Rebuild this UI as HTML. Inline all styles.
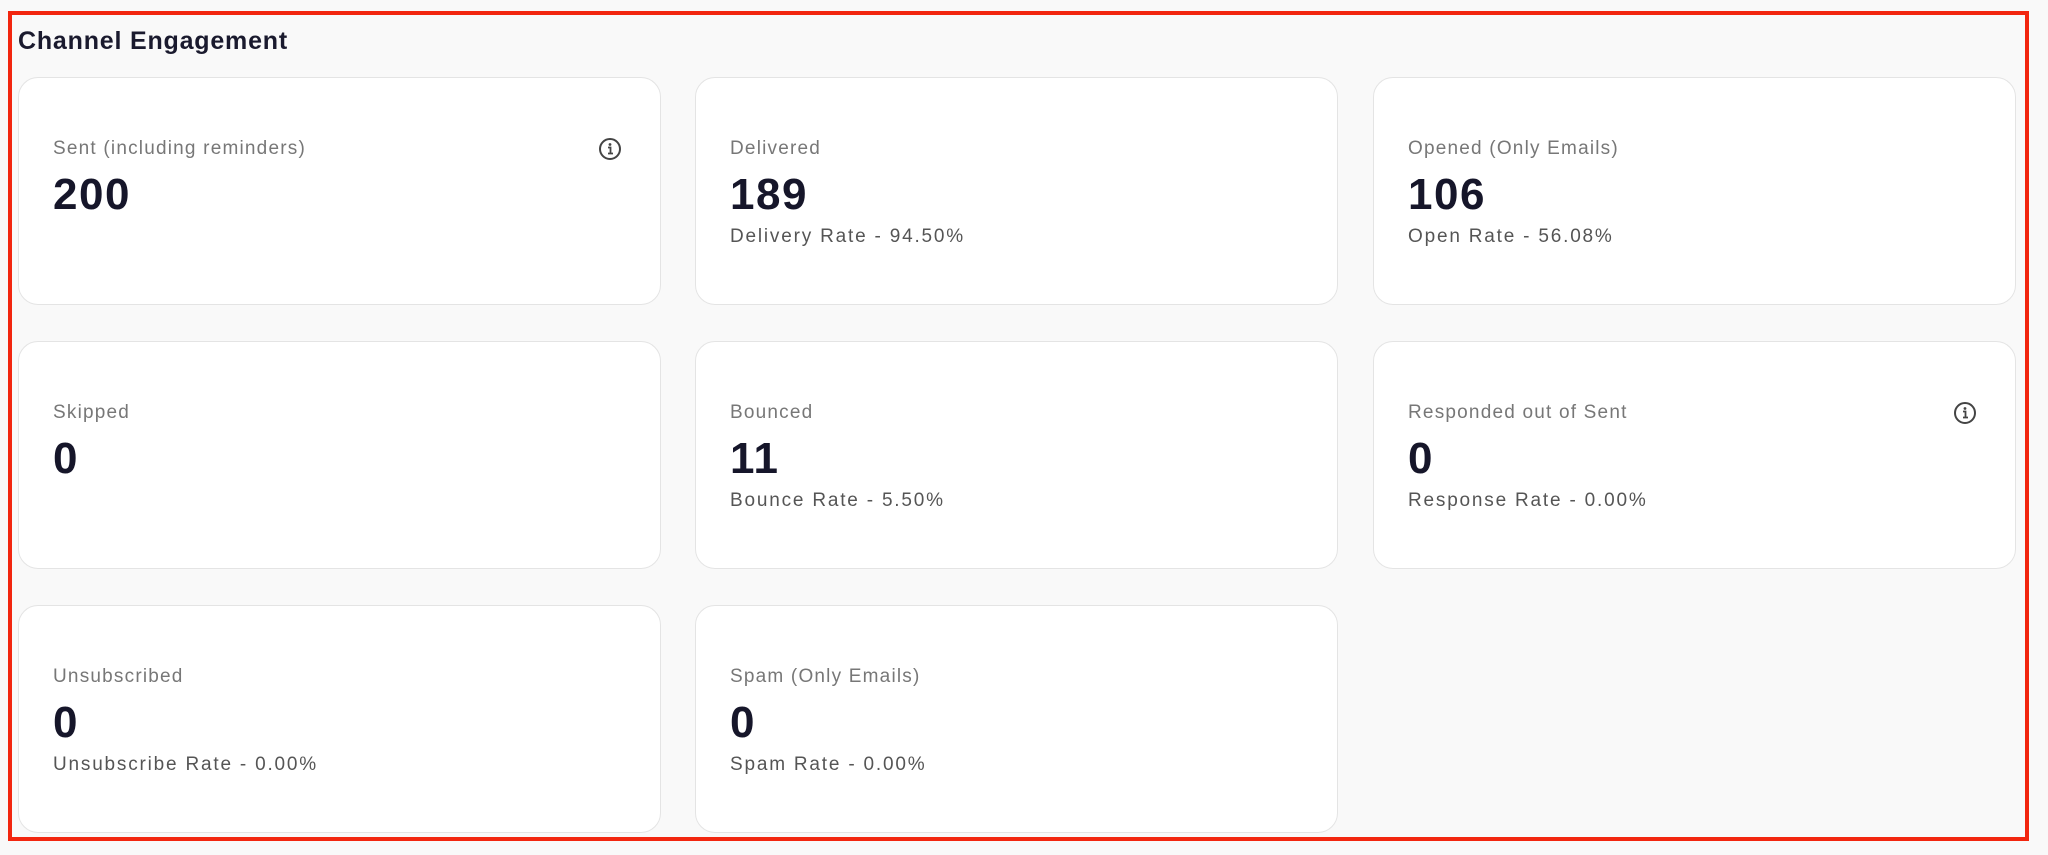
<!DOCTYPE html>
<html><head><meta charset="utf-8"><style>
*{box-sizing:border-box;margin:0;padding:0}
html,body{width:2048px;height:855px;background:#f9f9f9;font-family:"Liberation Sans",sans-serif;overflow:hidden;position:relative}
.frame{position:absolute;left:8px;top:11px;width:2021px;height:830px;border:4px solid #f2260f}
.title{position:absolute;left:18px;top:27px;font-size:25px;font-weight:600;color:#1a1a2e;letter-spacing:0.8px}
.card{position:absolute;width:643px;height:228px;background:#fff;border:1px solid #e4e4e4;border-radius:20px}
.lbl{position:absolute;left:34px;top:60px;font-size:19px;color:#777;letter-spacing:1.2px}
.num{position:absolute;left:34px;top:92px;font-size:44px;font-weight:600;color:#16162a;letter-spacing:1.5px}
.sub{position:absolute;left:34px;top:148px;font-size:19px;color:#555;letter-spacing:1.8px}
.info{position:absolute;right:38px;top:59px;width:24px;height:24px}
</style></head><body>
<div class="frame"></div>
<div class="title">Channel Engagement</div>

<div class="card" style="left:18px;top:77px"><div class="lbl">Sent (including reminders)</div><div class="num">200</div>
<svg class="info" viewBox="0 0 24 24"><circle cx="12" cy="12" r="10" fill="none" stroke="#444" stroke-width="2"/><circle cx="12" cy="7.5" r="1.4" fill="#444"/><path d="M10 10.5h2.5v6M10 16.5h5" stroke="#444" stroke-width="1.8" fill="none"/></svg></div>
<div class="card" style="left:695px;top:77px"><div class="lbl">Delivered</div><div class="num">189</div><div class="sub">Delivery Rate - 94.50%</div></div>
<div class="card" style="left:1373px;top:77px"><div class="lbl">Opened (Only Emails)</div><div class="num">106</div><div class="sub">Open Rate - 56.08%</div></div>

<div class="card" style="left:18px;top:341px"><div class="lbl">Skipped</div><div class="num">0</div></div>
<div class="card" style="left:695px;top:341px"><div class="lbl">Bounced</div><div class="num">11</div><div class="sub">Bounce Rate - 5.50%</div></div>
<div class="card" style="left:1373px;top:341px"><div class="lbl">Responded out of Sent</div><div class="num">0</div><div class="sub">Response Rate - 0.00%</div>
<svg class="info" viewBox="0 0 24 24"><circle cx="12" cy="12" r="10" fill="none" stroke="#444" stroke-width="2"/><circle cx="12" cy="7.5" r="1.4" fill="#444"/><path d="M10 10.5h2.5v6M10 16.5h5" stroke="#444" stroke-width="1.8" fill="none"/></svg></div>

<div class="card" style="left:18px;top:605px"><div class="lbl">Unsubscribed</div><div class="num">0</div><div class="sub">Unsubscribe Rate - 0.00%</div></div>
<div class="card" style="left:695px;top:605px"><div class="lbl">Spam (Only Emails)</div><div class="num">0</div><div class="sub">Spam Rate - 0.00%</div></div>
</body></html>
